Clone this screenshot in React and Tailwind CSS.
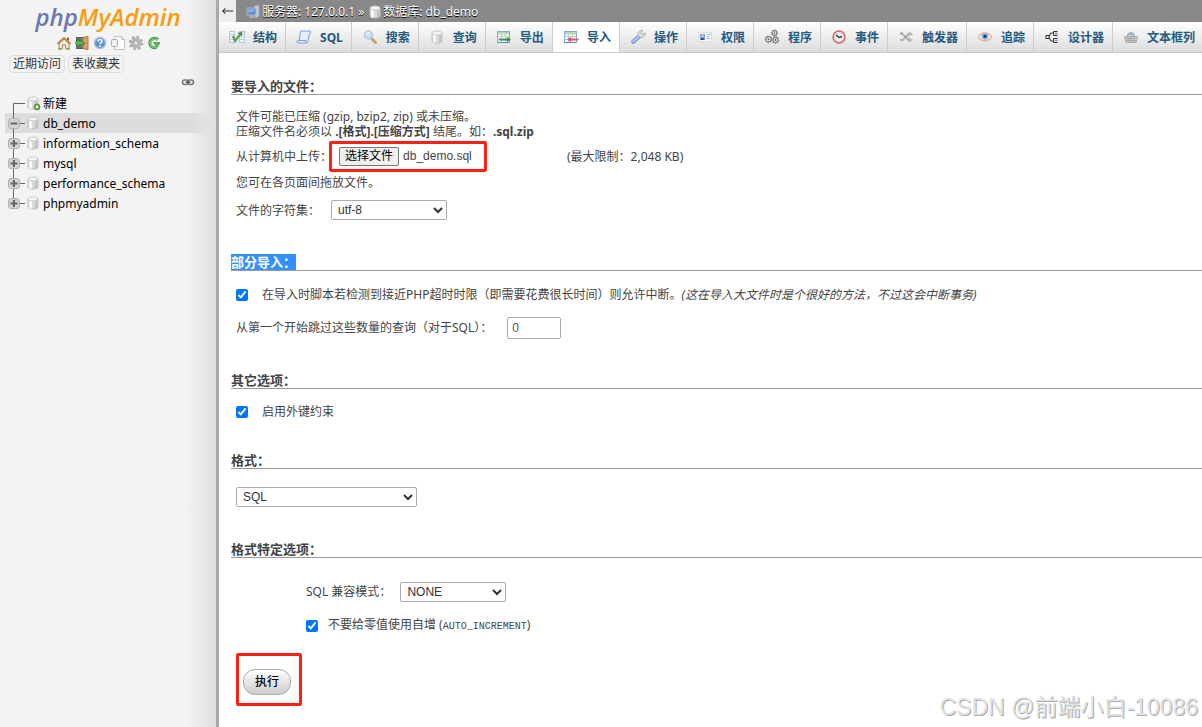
import React, { useRef, useState } from 'react';

const Svg = ({ children, className = 'w-4 h-4' }) => (
  <svg viewBox="0 0 16 16" className={`${className} shrink-0`} fill="none" aria-hidden="true">
    {children}
  </svg>
);

/* Shared database cylinder */
const Cylinder = () => (
  <>
    <path d="M3 4v8c0 1.300 2.200 2 5 2s5-.7 5-2V4z" fill="#dadada" stroke="#bdbdbd" />
    <path d="M5.500 5.500v8" stroke="#fff" strokeWidth="2.500" />
    <path d="M11 6v7" stroke="#c2c2c2" strokeWidth="2" />
    <ellipse cx="8" cy="4" rx="5" ry="2" fill="#f4f4f4" stroke="#cacaca" />
  </>
);

const DbIcon = () => <Svg><Cylinder /></Svg>;

const DbNewIcon = () => (
  <Svg>
    <Cylinder />
    <circle cx="12" cy="12" r="2.900" fill="#6aa83c" stroke="#4c8a26" />
    <circle cx="12" cy="12" r="1.400" fill="#fff" />
  </Svg>
);

const HomeIcon = () => (
  <Svg>
    <path d="M3 8v5.500h3.500V10h3v3.500H13V8L8 3.500z" fill="#f4ead2" stroke="#9a8a66" />
    <path d="M11 2.500h2v3h-2z" fill="#a05a2c" />
    <path d="M1.500 9L8 3l6.500 6" stroke="#b9824d" strokeWidth="2" />
    <path d="M2 14h4M10 14h4" stroke="#7fb062" strokeWidth="1.300" />
  </Svg>
);

const ExitIcon = () => (
  <Svg>
    <path d="M2.500 2.500h7v11h-7z" fill="#707070" stroke="#5b5b5b" />
    <path d="M9 2.500l5-1v13l-5-1z" fill="#d9a263" stroke="#a8763e" />
    <path d="M1 8l4-3.500v2h4v3H5v2z" fill="#5cb85c" stroke="#2b8a2b" strokeWidth=".7" />
    <circle cx="10.500" cy="8.500" r=".7" fill="#6b4112" />
  </Svg>
);

const HelpIcon = () => (
  <Svg>
    <circle cx="8" cy="8" r="5.600" fill="#6596d3" stroke="#a9c4e6" strokeWidth="1.400" />
    <path d="M6 6.500c0-2.600 4-2.400 4-.2 0 1.400-2 1.400-2 2.800" stroke="#fff" strokeWidth="1.500" />
    <circle cx="8" cy="11.200" r=".9" fill="#fff" />
  </Svg>
);

const DocsIcon = () => (
  <Svg>
    <path d="M4.500 1.500h7l3 3v10h-10z" fill="#fff" stroke="#c3c3c3" />
    <path d="M11.500 1.500v3h3" stroke="#bdbdbd" />
    <rect x="1.500" y="4.500" width="6" height="7" rx="1" fill="#ededed" stroke="#b0b0b0" />
    <path d="M4.500 6v4" stroke="#fff" strokeWidth="2" />
  </Svg>
);

const GearIcon = () => (
  <Svg>
    <circle cx="8" cy="8" r="6" stroke="#a6a6a6" strokeWidth="2.400" strokeDasharray="2.350 2.350" />
    <circle cx="8" cy="8" r="4" fill="#c8c8c8" stroke="#b5b5b5" strokeWidth="2.800" />
    <circle cx="8" cy="8" r="2" fill="#f3f3f3" stroke="#999" strokeWidth=".8" />
  </Svg>
);

const ReloadIcon = () => (
  <Svg>
    <path d="M12 4.700C9 2 3.800 3.800 3.800 8c0 3.800 3.700 5.500 6.400 4.300" stroke="#4a9d50" strokeWidth="3" />
    <path d="M11.500 4.800C9 2.800 4 4.300 4 8c0 3.200 3 4.800 5.700 4" stroke="#86d086" strokeWidth="1.200" />
    <path d="M7.500 7.500h6.500l-3 5z" fill="#63b763" stroke="#3c9445" strokeWidth=".8" />
  </Svg>
);

const LinkIcon = () => (
  <Svg>
    <rect x="2.500" y="6" width="6" height="4.500" rx="2.200" stroke="#777" strokeWidth="1.500" />
    <rect x="7.500" y="6" width="6" height="4.500" rx="2.200" stroke="#777" strokeWidth="1.500" />
    <path d="M5.500 8.200h5" stroke="#444" strokeWidth="1.200" />
  </Svg>
);

const ServerIcon = () => (
  <Svg>
    <path d="M9.500 1.500l4.500-.5v11.500L10 14z" fill="#c3cad6" stroke="#9aa2b0" />
    <rect x="2" y="4" width="9" height="7" fill="#5b8bd0" stroke="#aebbd0" />
    <path d="M3 5h6.500v2.500L3 9z" fill="#84ade6" />
    <path d="M4.500 13h5M6.500 11v2" stroke="#b5bcc8" strokeWidth="1.400" />
  </Svg>
);

const StructureIcon = () => (
  <Svg>
    <rect x=".5" y="2.500" width="5" height="11" fill="#eef4fb" stroke="#b4c8de" />
    <rect x="10.500" y="2.500" width="5" height="11" fill="#eef4fb" stroke="#b4c8de" />
    <path d="M1 5.500h4M1 8h4M1 10.500h4M11 5.500h4M11 8h4M11 10.500h4" stroke="#b9cbe0" />
    <path d="M4 7l2 5 5.500-7" stroke="#5c9f58" strokeWidth="2.200" />
    <path d="M8.500 4l5-1.500-1 5z" fill="#4b9046" />
  </Svg>
);

const SqlIcon = () => (
  <Svg>
    <path d="M4.500 2h9.500c1.500 0 1 2.500-.5 2.500L12 12c-.3 1.500-1 2-2 2H2c-1.500 0-1.500-2.500 0-2.500h1z" fill="#dfeafa" stroke="#7aa4d6" />
    <path d="M2 11.500h8c-.5 1 0 2.500 0 2.500" stroke="#7aa4d6" />
    <path d="M6 4.500h5M5.500 7h5M5 9.200h5" stroke="#f7fbff" strokeWidth="1.200" />
  </Svg>
);

const SearchIcon = () => (
  <Svg>
    <path d="M9.500 9.500l4 4" stroke="#cf9f66" strokeWidth="3" strokeLinecap="round" />
    <circle cx="6.500" cy="6" r="4" fill="#c7e0fa" stroke="#b3c8e0" strokeWidth="1.400" />
    <path d="M4.500 5.500c.4-1.200 1.300-1.700 2.500-1.600" stroke="#fff" strokeWidth="1.200" />
  </Svg>
);

const Sheet = () => (
  <>
    <rect x="1.500" y="2.500" width="12" height="11" fill="#f5f9ff" stroke="#84a9da" />
    <path d="M2 3h11v2.500H2z" fill="#bcd8b0" />
    <path d="M2 7.500h11M2 10.500h11M5.500 5.500v8M9.500 5.500v8" stroke="#b5cbe9" />
  </>
);

const ExportIcon = () => (
  <Svg>
    <Sheet />
    <path d="M3 10.500h9" stroke="#4a954a" strokeWidth="2" />
    <path d="M11 8l4 2.500-4 2.500z" fill="#3d8b3d" />
    <path d="M1.500 13.500h12" stroke="#5c8ccb" />
  </Svg>
);

const ImportIcon = () => (
  <Svg>
    <Sheet />
    <path d="M7 10.500h8.500" stroke="#e35a5a" strokeWidth="2" />
    <path d="M8 8l-4 2.500L8 13z" fill="#e04a4a" />
    <path d="M1.500 13.500h12" stroke="#5c8ccb" />
  </Svg>
);

const WrenchIcon = () => (
  <Svg>
    <path d="M3.300 12.700l5.500-5" stroke="#7f9cdd" strokeWidth="4.400" strokeLinecap="round" />
    <path d="M3.300 12.300l5-4.600" stroke="#b0c5f3" strokeWidth="2" strokeLinecap="round" />
    <path d="M8 6.500C7.500 3 10 1 13 1.500l-2 2 1.200 1.500 3-1c.3 3-2 5-5 4.500z" fill="#d8d8d8" stroke="#a8a8a8" strokeWidth=".8" />
  </Svg>
);

const RightsIcon = () => (
  <Svg>
    <rect x="1.500" y="3.500" width="13" height="9" fill="#f6f9fd" stroke="#d3dce7" />
    <rect x="3" y="5" width="5" height="6" fill="#7ba3da" />
    <circle cx="5.500" cy="7" r="1.300" fill="#f3c79b" />
    <path d="M3.500 11c.3-3 3.700-3 4 0z" fill="#34507f" />
    <path d="M10 5.500h3.500M10 7.500h2.500M10 9.500h3.500" stroke="#9db5d6" />
  </Svg>
);

const RoutinesIcon = () => (
  <Svg>
    <g stroke="#808080" strokeWidth="1.200" fill="#ececec">
      <circle cx="10.500" cy="4" r="2.300" />
      <circle cx="4.500" cy="10.300" r="2.600" />
      <circle cx="11.500" cy="11" r="2.600" />
    </g>
    <g stroke="#858585" strokeDasharray="1.200 1.200">
      <circle cx="10.500" cy="4" r="3.200" />
      <circle cx="4.500" cy="10.300" r="3.500" />
      <circle cx="11.500" cy="11" r="3.500" />
    </g>
    <circle cx="4.500" cy="10.300" r=".9" fill="#555" />
    <circle cx="11.500" cy="11" r=".9" fill="#555" />
    <circle cx="10.500" cy="4" r=".8" fill="#555" />
  </Svg>
);

const EventsIcon = () => (
  <Svg>
    <circle cx="8" cy="8" r="5.900" fill="#f0f0f0" stroke="#e26363" strokeWidth="1.600" />
    <circle cx="8" cy="8" r="4.700" stroke="#ddd" />
    <path d="M5 6l3.300 2.500 2.700-1" stroke="#333" strokeWidth="1.400" />
  </Svg>
);

const TriggersIcon = () => (
  <Svg>
    <path d="M2 5h2.500l6 6H12M2 11h2.500l6-6H12" stroke="#b3b3b3" strokeWidth="2" />
    <path d="M11 3l3.500 2L11 7zM11 9l3.500 2-3.500 2z" fill="#c4c4c4" stroke="#a5a5a5" strokeWidth=".6" />
    <path d="M2 4h3M6 8h4" stroke="#8f8f8f" />
  </Svg>
);

const EyeIcon = () => (
  <Svg>
    <path d="M1.500 8c2.500-5.500 10.500-5.500 13 0-2.500 5-10.500 5-13 0z" fill="#fbf3ec" stroke="#e2b898" strokeWidth="1.500" />
    <circle cx="8" cy="7.500" r="3.300" fill="#86abe8" />
    <circle cx="8" cy="7.300" r="1.500" fill="#1d2f63" />
  </Svg>
);

const DesignerIcon = () => (
  <Svg>
    <path d="M4.500 8L7 4h3M4.500 8L7 12h3" stroke="#444" strokeWidth="1.200" />
    <rect x="2" y="6.500" width="3" height="3" fill="#eee" stroke="#333" />
    <path d="M13.500 2.500h-4v4h4M13.500 9.500h-4v4h4" fill="#e8e6ff" stroke="#333" />
    <path d="M11 4.500h2.500M11 11.500h2.500" stroke="#8a82d8" strokeWidth="1.500" />
  </Svg>
);

const BasketIcon = () => (
  <Svg>
    <path d="M4.500 8c0-5.500 7-5.500 7 0" stroke="#a3a3a3" strokeWidth="1.400" />
    <path d="M5.500 6.500L8 3.500l2.500 3z" fill="#7badde" />
    <path d="M1.500 7.500h13l-1.500 6H3z" fill="#d2d2d2" stroke="#ababab" />
    <path d="M2.500 9.500h11M3 11.500h10M5 7.500l.5 6M8 7.500v6M11 7.500l-.5 6" stroke="#a0a0a0" strokeWidth=".8" />
  </Svg>
);

const tabs = [
  { label: '结构', Icon: StructureIcon },
  { label: 'SQL', Icon: SqlIcon },
  { label: '搜索', Icon: SearchIcon },
  { label: '查询', Icon: DbIcon },
  { label: '导出', Icon: ExportIcon },
  { label: '导入', Icon: ImportIcon, active: true },
  { label: '操作', Icon: WrenchIcon },
  { label: '权限', Icon: RightsIcon },
  { label: '程序', Icon: RoutinesIcon },
  { label: '事件', Icon: EventsIcon },
  { label: '触发器', Icon: TriggersIcon },
  { label: '追踪', Icon: EyeIcon },
  { label: '设计器', Icon: DesignerIcon },
  { label: '文本框列', Icon: BasketIcon }
];

const shortcuts = [
  { label: '主页', Icon: HomeIcon },
  { label: '退出', Icon: ExitIcon },
  { label: 'phpMyAdmin 文档', Icon: HelpIcon },
  { label: 'MySQL 文档', Icon: DocsIcon },
  { label: '导航面板设置', Icon: GearIcon },
  { label: '刷新导航面板', Icon: ReloadIcon }
];

const databases = ['db_demo', 'information_schema', 'mysql', 'performance_schema', 'phpmyadmin'];

/* Lines and the +/- box to the left of each tree row */
const Branch = ({ first, last, open }) => (
  <svg viewBox="0 0 20 20" className="w-5 h-5 shrink-0" fill="none" aria-hidden="true">
    <path d={first ? 'M8.500 20v-9.500H20' : last ? 'M8.500 0v10.500H20' : 'M8.500 0v20M8.500 10.500H20'} stroke="#666" />
    {!first && (
      <>
        <rect x="3.500" y="5.500" width="11" height="10" rx="2.500" fill="#d3d3d3" stroke="#b3b3b3" />
        <path d={open ? 'M5.500 10.500h7' : 'M5.500 10.500h7M9 7v7'} stroke="#666" strokeWidth="2" />
      </>
    )}
  </svg>
);

const Sidebar = () => (
  <aside className="w-[219px] shrink-0 border-r-[3px] border-[#aaa] bg-[linear-gradient(to_right,#f3f3f3_86%,#dcdfe3)]">
    <a href="#home" className="block text-center font-['Open_Sans',sans-serif] text-[24px] leading-[33px] font-semibold italic text-[#f89c0e]">
      <span className="text-[#6c78af]">php</span>MyAdmin
    </a>
    <div className="flex justify-center gap-0.5 pt-0.5 pl-0.5">
      {shortcuts.map(({ label, Icon }) => (
        <a key={label} href="#nav" aria-label={label}><Icon /></a>
      ))}
    </div>
    <div className="flex gap-[3px] pt-1 pl-[9px]">
      {['近期访问', '表收藏夹'].map((label) => (
        <button key={label} type="button" className="rounded border border-[#ddd] px-[3px] leading-4 text-[#333]">
          {label}
        </button>
      ))}
    </div>
    <div className="flex justify-end pt-px pr-5">
      <button type="button" aria-label="取消与主面板的链接"><LinkIcon /></button>
    </div>
    <ul className="pt-[3px] pl-[5px] text-black">
      <li className="flex h-5 items-center">
        <Branch first />
        <DbNewIcon />
        <a href="#new" className="pt-0.5 pl-0.5">新建</a>
      </li>
      {databases.map((name, i) => (
        <li key={name} className={`flex h-5 items-center ${i === 0 ? 'bg-[linear-gradient(to_right,#ddd_90%,transparent)]' : ''}`}>
          <Branch open={i === 0} last={i === databases.length - 1} />
          <DbIcon />
          <a href={`#${name}`} className="pt-0.5 pl-0.5">{name}</a>
        </li>
      ))}
    </ul>
  </aside>
);

const Section = ({ title, selected, children }) => (
  <section className="pb-8 last:pb-5">
    <h2 className="border-b border-[#999] text-[13px] leading-4 font-bold">
      <span className={selected ? 'inline-block bg-[#3390ff] text-white' : ''}>{title}</span>
    </h2>
    <div className="px-[5px]">{children}</div>
  </section>
);

const Check = ({ id, gap = 'gap-3.5', children }) => (
  <div className={`flex items-center leading-4 ${gap}`}>
    <input id={id} type="checkbox" defaultChecked className="h-3 w-3 accent-[#0075ff]" />
    <label htmlFor={id}>{children}</label>
  </div>
);

const selectClass = "h-5 rounded-xs border border-[#aaa] bg-white pl-0.5 font-['Liberation_Sans',sans-serif] text-xs text-[#333]";

export default function App() {
  const fileInput = useRef(null);
  const [fileName, setFileName] = useState('db_demo.sql');

  return (
    <div className="relative flex min-h-screen overflow-hidden bg-white font-['Noto_Sans','Noto_Sans_CJK_SC',sans-serif] text-xs text-[#444]">
      <Sidebar />

      <div className="min-w-0 flex-1">
        {/* Breadcrumb */}
        <header className="flex h-[22px] items-center bg-[#888] text-white">
          <button type="button" aria-label="隐藏面板" className="flex h-full w-[17px] items-center justify-center bg-[#eee] text-[#333]">
            <Svg className="w-3.5 h-3.5"><path d="M14 8H2M5 5L2 8l3 3" stroke="#333" strokeWidth="1.200" /></Svg>
          </button>
          <nav className="flex items-center pt-0.5 pl-[9px] text-shadow-[0_1px_0_#000]">
            <ServerIcon />
            <a href="#server" className="pl-px">服务器: 127.0.0.1</a>
            <span className="px-[3px]">»</span>
            <DbIcon />
            <a href="#db">数据库: db_demo</a>
          </nav>
        </header>

        {/* Top menu */}
        <nav className="flex h-[31px] overflow-hidden border-b border-[#ccc]">
          {tabs.map(({ label, Icon, active }) => (
            <a
              key={label}
              href="#tab"
              className={`flex shrink-0 items-center gap-2 border-r border-[#ccc] pr-2 pl-2.5 font-bold text-[#235a81] ${
                active ? 'bg-white' : 'bg-linear-to-b from-white to-[#dcdcdc]'
              }`}
            >
              <Icon />
              <span className="pt-0.5">{label}</span>
            </a>
          ))}
        </nav>

        <form className="pt-[25px] pl-3" onSubmit={(e) => e.preventDefault()}>
          <Section title="要导入的文件：">
            <p className="pt-3.5 leading-[15px]">
              文件可能已压缩 (gzip, bzip2, zip) 或未压缩。
              <br />
              压缩文件名必须以 <b>.[格式].[压缩方式]</b> 结尾。如：<b>.sql.zip</b>
            </p>
            <div className="flex h-[34px] items-center">
              <label htmlFor="input_file" className="pt-0.5">从计算机中上传：</label>
              <div className="-ml-[3px] flex h-[31px] w-[158px] items-center gap-1 rounded-xs border-3 border-[#ff2116] pl-[7px] font-['Liberation_Sans','Noto_Sans_CJK_SC',sans-serif]">
                <button
                  type="button"
                  onClick={() => fileInput.current.click()}
                  className="h-[19px] rounded-xs border border-[#767676] bg-[#efefef] px-[5px] leading-4 text-black"
                >
                  选择文件
                </button>
                <span>{fileName}</span>
                <input
                  ref={fileInput}
                  id="input_file"
                  type="file"
                  className="hidden"
                  onChange={(e) => setFileName(e.target.files[0]?.name ?? '')}
                />
              </div>
              <span className="pt-0.5 pl-20">(最大限制：2,048 KB)</span>
            </div>
            <p className="pt-0.5 leading-4">您可在各页面间拖放文件。</p>
            <div className="flex items-center pt-[9px] pb-0.5">
              <label htmlFor="charset" className="w-[95px] pt-0.5">文件的字符集：</label>
              <select id="charset" className={`${selectClass} w-[116px]`}>
                <option>utf-8</option>
              </select>
            </div>
          </Section>

          <Section title="部分导入：" selected>
            <div className="pt-4">
              <Check id="allow_interrupt">
                在导入时脚本若检测到接近PHP超时时限（即需要花费很长时间）则允许中断。
                <i>(这在导入大文件时是个很好的方法，不过这会中断事务)</i>
              </Check>
            </div>
            <div className="flex items-center gap-[15px] pt-3.5 pb-px">
              <label htmlFor="skip_queries">从第一个开始跳过这些数量的查询（对于SQL）：</label>
              <input
                id="skip_queries"
                type="text"
                defaultValue="0"
                className="h-[22px] w-[54px] rounded-xs border border-[#aaa] px-1 font-['Liberation_Sans',sans-serif] text-[#555]"
              />
            </div>
          </Section>

          <Section title="其它选项：">
            <div className="pt-[15px]">
              <Check id="fk_checks">启用外键约束</Check>
            </div>
          </Section>

          <Section title="格式：">
            <div className="flex pt-[18px] pb-0.5">
              <select aria-label="格式" className={`${selectClass} w-[181px]`}>
                <option>SQL</option>
              </select>
            </div>
          </Section>

          <Section title="格式特定选项：">
            <div className="pt-6 pl-[70px]">
              <div className="flex items-center gap-[9px]">
                <label htmlFor="sql_compat">SQL 兼容模式：</label>
                <select id="sql_compat" className={`${selectClass} w-[106px]`}>
                  <option>NONE</option>
                </select>
              </div>
              <div className="pt-[15px]">
                <Check id="no_auto_value" gap="gap-2.5">
                  不要给零值使用自增 (<code className="font-['Liberation_Mono',monospace] text-[10px]">AUTO_INCREMENT</code>)
                </Check>
              </div>
            </div>
            <div className="mt-[18px] flex h-[53px] w-[66px] items-end rounded-xs border-3 border-[#ff2116] pb-2 pl-1">
              <button type="submit" className="h-[26px] w-12 rounded-xl border border-[#aaa] bg-linear-to-b from-white to-[#ccc] font-medium text-black">
                执行
              </button>
            </div>
          </Section>
        </form>
      </div>

      <div className="pointer-events-none absolute right-1 bottom-0 font-['Liberation_Sans','Noto_Sans_CJK_SC',sans-serif] text-[23px] leading-10 text-[#e4e4e4] text-shadow-[1px_1px_0_#aaa]">
        CSDN @前端小白-10086
      </div>
    </div>
  );
}
